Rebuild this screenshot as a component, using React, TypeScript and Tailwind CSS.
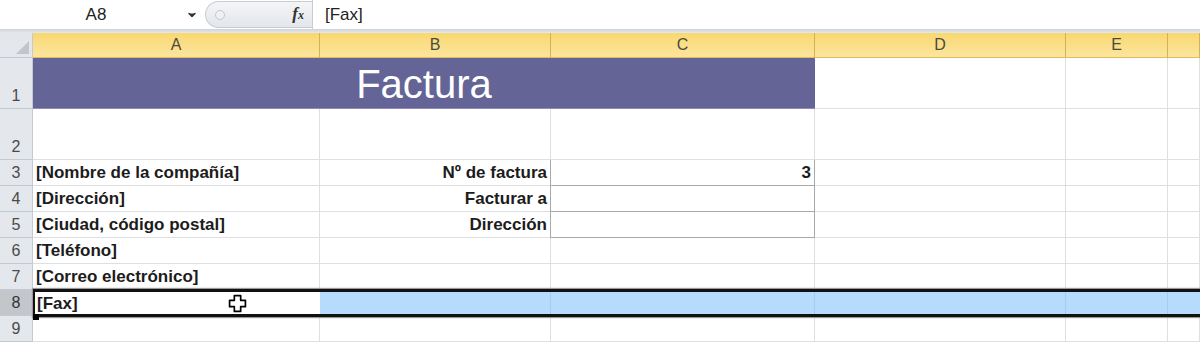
import { ChevronDown } from 'lucide-react';

const GRID = 'grid grid-cols-[33px_287px_231px_264px_251px_102px_1fr] overflow-hidden';
const LINE = 'border-r border-b border-[#dde0e3]';
const HEAD_COLS = ['A', 'B', 'C', 'D', 'E', ''];
const CELL = 'text-[17px] leading-[20px] font-bold text-[#1c1c1c]';

const ROWS = [
  { n: 3, a: '[Nombre de la compañía]', b: 'Nº de factura', c: '3', box: true },
  { n: 4, a: '[Dirección]', b: 'Facturar a', c: '', box: true },
  { n: 5, a: '[Ciudad, código postal]', b: 'Dirección', c: '', box: true },
  { n: 6, a: '[Teléfono]', b: '', c: '' },
  { n: 7, a: '[Correo electrónico]', b: '', c: '' },
];

const RowHead = ({ n, h, active }: { n: number; h: string; active?: boolean }) => (
  <div
    className={`${h} flex items-end justify-center pb-[3px] border-r border-b border-[#c5cad0] text-[16px] leading-[18px] ${
      active ? 'bg-[#c3c6ca] text-[#333]' : 'bg-[#e4e7eb] text-[#4a4a4a]'
    }`}
  >
    {n}
  </div>
);

export default function App() {
  return (
    <div className="w-[1200px] h-[343px] overflow-hidden bg-white font-['Liberation_Sans',Arial,sans-serif] select-none">
      {/* Barra de fórmulas */}
      <div className="h-[29px] flex items-stretch bg-white">
        <div className="w-[205px] flex items-center">
          <span className="flex-1 text-center text-[17px] leading-[20px] text-[#222] pl-[6px]">A8</span>
          <ChevronDown size={12} strokeWidth={3} className="text-[#333] mr-[7px] fill-[#333]" />
        </div>
        <div className="w-[107px] my-[1px] flex items-center rounded-l-full border border-r-0 border-[#c9ccd1] bg-gradient-to-b from-[#f4f5f7] to-[#e3e6ea]">
          <div className="ml-[9px] w-[10px] h-[10px] rounded-full border border-[#c4c7cc] bg-[#eef0f2]" />
          <span className="ml-auto mr-[8px] text-[17px] leading-[20px] italic font-bold font-['Liberation_Serif',serif] text-[#333]">
            f<span className="text-[12px]">x</span>
          </span>
        </div>
        <div className="flex-1 flex items-center border-l border-[#c9ccd1] pl-[12px] text-[17px] leading-[20px] text-[#222]">
          [Fax]
        </div>
      </div>
      <div className="h-[4px] bg-gradient-to-b from-[#cfd3d8] to-[#e6e9ec]" />

      {/* Encabezados de columna */}
      <div className={`${GRID} h-[25px]`}>
        <div className="bg-[#e4e7eb] border-r border-b border-[#c5cad0] flex items-end justify-end p-[3px]">
          <div className="w-0 h-0 border-l-[13px] border-l-transparent border-b-[13px] border-b-[#c2c6cb]" />
        </div>
        {HEAD_COLS.map((c, i) => (
          <div
            key={i}
            className="flex items-center justify-center bg-gradient-to-b from-[#f8d86f] to-[#fde59f] border-r border-[#d9b04e] border-b border-b-[#e2bb55] text-[16px] leading-[18px] text-[#4b4a3c]"
          >
            {c}
          </div>
        ))}
      </div>

      {/* Fila 1 */}
      <div className={`${GRID} h-[51px]`}>
        <RowHead n={1} h="h-[51px]" />
        <div className="col-span-3 bg-[#646497] border-b border-[#8c8cb4] flex items-center justify-center text-white text-[40px] leading-none pt-[2px]">
          Factura
        </div>
        <div className={LINE} />
        <div className={LINE} />
        <div className={LINE} />
      </div>

      {/* Fila 2 */}
      <div className={`${GRID} h-[51px]`}>
        <RowHead n={2} h="h-[51px]" />
        {[0, 1, 2, 3, 4, 5].map((i) => (
          <div key={i} className={LINE} />
        ))}
      </div>

      {/* Filas 3-7 */}
      {ROWS.map((r) => (
        <div key={r.n} className={`${GRID} h-[26px]`}>
          <RowHead n={r.n} h="h-[26px]" />
          <div className={`${LINE} ${CELL} flex items-end pb-[2px] pl-[3px] whitespace-nowrap`}>{r.a}</div>
          <div className={`${LINE} ${CELL} flex items-end justify-end pb-[2px] pr-[3px]`}>{r.b}</div>
          <div
            className={`${
              r.box ? 'border border-[#a8a8a8] -mt-px -ml-px' : LINE
            } ${CELL} flex items-end justify-end pb-[2px] pr-[3px]`}
          >
            {r.c}
          </div>
          <div className={LINE} />
          <div className={LINE} />
          <div className={LINE} />
        </div>
      ))}

      {/* Fila 8 seleccionada */}
      <div className="grid grid-cols-[33px_1fr] h-[26px]">
        <RowHead n={8} h="h-[26px]" active />
        <div className="relative flex">
          <div className={`w-[287px] bg-white flex items-end pb-[2px] pl-[4px] ${CELL}`}>[Fax]</div>
          <div className="flex-1 flex bg-[#b7dbfc]">
            <div className="w-[231px] border-r border-[#a9cbe8]" />
            <div className="w-[264px] border-r border-[#a9cbe8]" />
            <div className="w-[251px] border-r border-[#a9cbe8]" />
            <div className="w-[102px] border-r border-[#a9cbe8]" />
          </div>
          {/* borde de selección */}
          <div className="absolute -top-[1px] -bottom-[1px] left-0 right-0 border-y-[3px] border-l-[2px] border-[#111] shadow-[0_0_1px_1px_#9a9a9a] pointer-events-none" />
          {/* controlador de relleno */}
          <div className="absolute left-0 -bottom-[4px] w-[6px] h-[6px] bg-black" />
          {/* cursor */}
          <svg className="absolute left-[195px] top-[4px]" width="19" height="19" viewBox="0 0 18 18">
            <path
              d="M6 1.5h6v4.5h4.5v6H12v4.5H6V12H1.5V6H6z"
              fill="#fff"
              stroke="#000"
              strokeWidth="1.6"
              strokeLinejoin="round"
            />
          </svg>
        </div>
      </div>

      {/* Fila 9 */}
      <div className={`${GRID} h-[26px]`}>
        <RowHead n={9} h="h-[26px]" />
        {[0, 1, 2, 3, 4, 5].map((i) => (
          <div key={i} className={LINE} />
        ))}
      </div>
    </div>
  );
}
